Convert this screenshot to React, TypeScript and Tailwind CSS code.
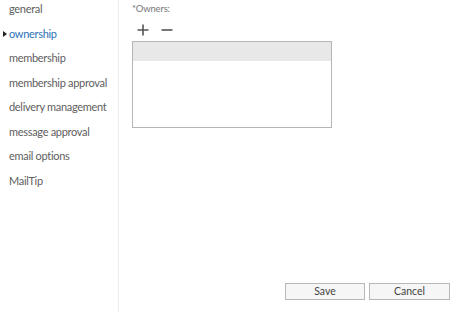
import { useState } from "react";

const NAV = [
  "general",
  "ownership",
  "membership",
  "membership approval",
  "delivery management",
  "message approval",
  "email options",
  "MailTip",
];

export default function App() {
  const [active] = useState("ownership");

  return (
    <div
      className="flex h-[312px] w-[474px] bg-white text-[#444]"
      style={{ fontFamily: 'Lato, "Noto Sans", sans-serif' }}
    >
      {/* left nav */}
      <nav className="flex w-[119px] shrink-0 flex-col border-r border-[#ececec]">
        {NAV.map((item) => (
          <div
            key={item}
            className="relative h-[24.5px] whitespace-nowrap pl-[9px] pt-[2px] text-[11px] leading-[14px] tracking-[-0.3px]"
          >
            {item === active && (
              <span className="absolute left-[3px] top-[6px] h-0 w-0 border-y-[3px] border-l-[4px] border-y-transparent border-l-[#222]" />
            )}
            <span className={item === active ? "text-[#2a72b5]" : "text-[#5e5e5e]"}>{item}</span>
          </div>
        ))}
      </nav>

      {/* content */}
      <div className="flex flex-1 flex-col pl-[13px] pt-[3px]">
        <div className="text-[9.5px] leading-[12px] tracking-[-0.2px] text-[#777]">*Owners:</div>
        <div className="mt-[9px] flex items-center gap-[12px] pl-[5px]">
          <svg width="12" height="12" viewBox="0 0 12 12">
            <path d="M6 0.5v11M0.5 6h11" stroke="#555" strokeWidth="1.6" />
          </svg>
          <svg width="12" height="12" viewBox="0 0 12 12">
            <path d="M0.5 6h11" stroke="#555" strokeWidth="1.6" />
          </svg>
        </div>
        <div className="mt-[5px] h-[87px] w-[200px] border border-[#b5b5b5] bg-white">
          <div className="h-[19px] bg-[#e8e8e8]" />
        </div>

        <div className="mt-auto mb-[12px] flex justify-end gap-[4px] pr-[24px]">
          <button className="h-[17px] w-[80px] border border-[#b8b8b8] bg-[#f6f6f6] text-[10.5px] leading-none text-[#444]">
            Save
          </button>
          <button className="h-[17px] w-[81px] border border-[#b8b8b8] bg-[#f6f6f6] text-[10.5px] leading-none text-[#444]">
            Cancel
          </button>
        </div>
      </div>
    </div>
  );
}
